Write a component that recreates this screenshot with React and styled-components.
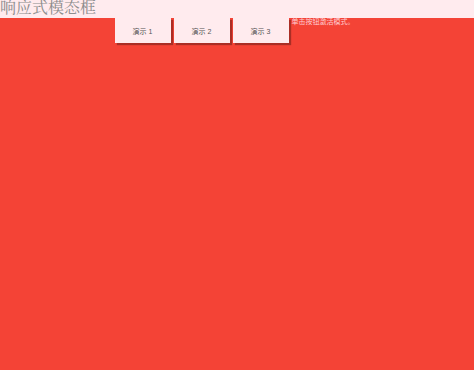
import React from "react";
import styled, { createGlobalStyle } from "styled-components";

const GlobalStyle = createGlobalStyle`
  html, body {
    margin: 0;
    padding: 0;
    background: #ffebee;
  }
  body {
    font-family: "Liberation Sans", "Noto Sans CJK SC", sans-serif;
  }
`;

const Page = styled.div`
  display: flex;
  flex-direction: column;
  height: 370px;
`;

const Title = styled.h1`
  margin: 0;
  height: 18px;
  font-family: "Liberation Serif", "Noto Serif CJK SC", "Noto Sans CJK SC", serif;
  font-size: 16px;
  font-weight: normal;
  line-height: 16px;
  color: #8d8d8d;
`;

const Stage = styled.section`
  flex: 1;
  background: #f44336;
  display: flex;
  justify-content: center;
  align-items: flex-start;
  gap: 3px;
`;

const DemoButton = styled.button`
  width: 56px;
  height: 25px;
  border: none;
  padding: 0;
  background: #ffebee;
  color: #555;
  font-family: "Liberation Sans", "Noto Sans CJK SC", sans-serif;
  font-size: 7px;
  box-shadow: 2px 2px 1px rgba(0, 0, 0, 0.3);
  cursor: pointer;
`;

const Hint = styled.p`
  margin: 0 5px 0 0;
  font-size: 7px;
  line-height: 8px;
  color: #ffcdd2;
`;

export default function App() {
  return (
    <>
      <GlobalStyle />
      <Page>
        <Title>响应式模态框</Title>
        <Stage>
          <DemoButton>演示 1</DemoButton>
          <DemoButton>演示 2</DemoButton>
          <DemoButton>演示 3</DemoButton>
          <Hint>单击按钮激活模式。</Hint>
        </Stage>
      </Page>
    </>
  );
}
